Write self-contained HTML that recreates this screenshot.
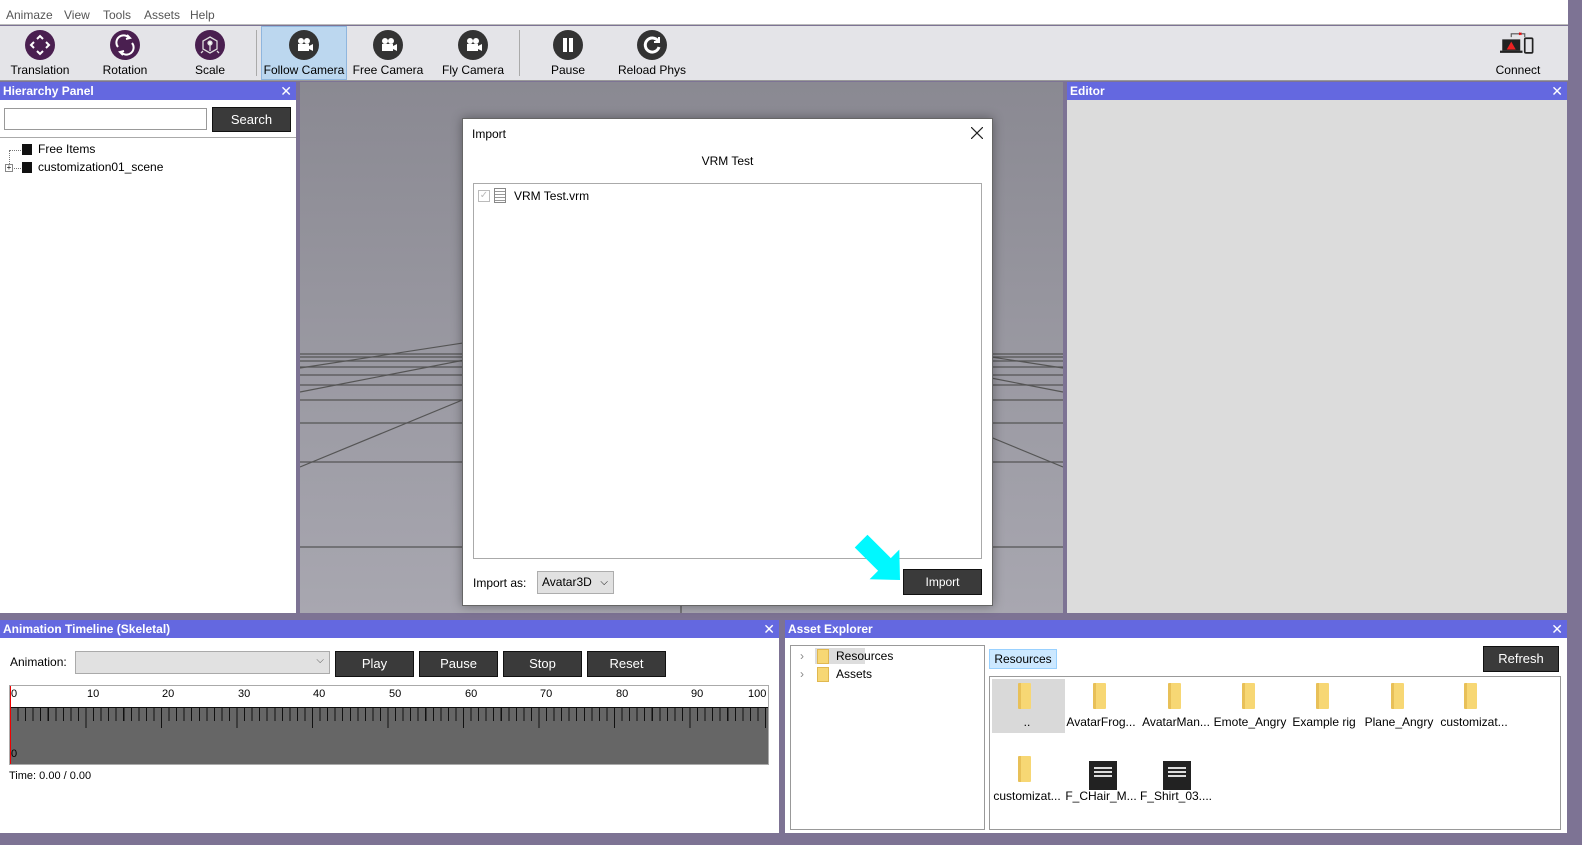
<!DOCTYPE html>
<html><head><meta charset="utf-8"><style>
*{box-sizing:border-box;margin:0;padding:0}
body{width:1582px;height:845px;overflow:hidden;background:#7d7394;font-family:"Liberation Sans",sans-serif;font-size:12px;color:#000;position:relative}
.a{position:absolute}
.menu{left:0;top:0;width:1568px;height:25px;background:#fff;border-bottom:1px solid #bbb}
.menu span{position:absolute;top:8px;color:#555;font-size:12px}
.tb{left:0;top:26px;width:1568px;height:55px;background:#e4e4e8;border-bottom:1px solid #999}
.tool{position:absolute;top:0;height:54px;text-align:center;font-size:12px}
.tool .ic{position:absolute;left:50%;top:4px;margin-left:-15px;width:30px;height:30px;border-radius:50%}
.tool .lb{position:absolute;left:0;right:0;top:37px;white-space:nowrap}
.title{height:18px;background:#6468e0;color:#fff;font-weight:bold;font-size:12px;line-height:18px;padding-left:3px}
.title .x{position:absolute;right:4px;top:0;font-weight:normal;font-size:14px}
.btn{position:absolute;background:#3a3a3a;border:1px solid #111;color:#fff;text-align:center;font-size:13px}
</style></head><body>
<div class="a menu">
<span style="left:6px">Animaze</span><span style="left:64px">View</span><span style="left:103px">Tools</span><span style="left:144px">Assets</span><span style="left:190px">Help</span>
</div>
<div class="a tb">
<div class="tool" style="left:0;width:80px"><div class="ic" style="background:#4a1f50"><svg width="30" height="30" viewBox="0 0 30 30" fill="none" stroke="#fff" stroke-width="2"><path d="M12 9l3-3 3 3M12 21l3 3 3-3M9 12l-3 3 3 3M21 12l3 3-3 3"/></svg></div><div class="lb">Translation</div></div>
<div class="tool" style="left:85px;width:80px"><div class="ic" style="background:#4a1f50"><svg width="30" height="30" viewBox="0 0 30 30" fill="none" stroke="#fff" stroke-width="2"><path d="M8 17a7 7 0 0 1 11-9M22 13a7 7 0 0 1-11 9"/><path d="M17 5l3 3-4 1M13 25l-3-3 4-1"/></svg></div><div class="lb">Rotation</div></div>
<div class="tool" style="left:170px;width:80px"><div class="ic" style="background:#4a1f50"><svg width="30" height="30" viewBox="0 0 30 30" fill="none" stroke="#ddd" stroke-width="1.3"><path d="M15 7l7 4v8l-7 4-7-4v-8z"/><circle cx="15" cy="13" r="2" fill="#fff"/><path d="M15 15v6M8 21l-2 2M22 21l2 2"/></svg></div><div class="lb">Scale</div></div>
<div style="position:absolute;left:256px;top:4px;width:1px;height:46px;background:#aaa"></div>
<div class="tool" style="left:261px;width:86px;background:#bcd7ef;border:1px solid #8fb6de"><div class="ic" style="background:#333;top:3px"><svg width="30" height="30" viewBox="0 0 30 30" fill="#fff"><circle cx="12" cy="11" r="3"/><circle cx="18" cy="11" r="3"/><rect x="9" y="14" width="11" height="7"/><path d="M20 16l4-2v7l-4-2z"/></svg></div><div class="lb" style="top:36px">Follow Camera</div></div>
<div class="tool" style="left:350px;width:76px"><div class="ic" style="background:#333"><svg width="30" height="30" viewBox="0 0 30 30" fill="#fff"><circle cx="12" cy="11" r="3"/><circle cx="18" cy="11" r="3"/><rect x="9" y="14" width="11" height="7"/><path d="M20 16l4-2v7l-4-2z"/></svg></div><div class="lb">Free Camera</div></div>
<div class="tool" style="left:435px;width:76px"><div class="ic" style="background:#333"><svg width="30" height="30" viewBox="0 0 30 30" fill="#fff"><circle cx="12" cy="11" r="3"/><circle cx="18" cy="11" r="3"/><rect x="9" y="14" width="11" height="7"/><path d="M20 16l4-2v7l-4-2z"/></svg></div><div class="lb">Fly Camera</div></div>
<div style="position:absolute;left:519px;top:4px;width:1px;height:46px;background:#aaa"></div>
<div class="tool" style="left:530px;width:76px"><div class="ic" style="background:#333"><svg width="30" height="30" viewBox="0 0 30 30" fill="#fff"><rect x="10" y="8" width="4" height="14"/><rect x="16" y="8" width="4" height="14"/></svg></div><div class="lb">Pause</div></div>
<div class="tool" style="left:612px;width:80px"><div class="ic" style="background:#333"><svg width="30" height="30" viewBox="0 0 30 30" fill="none" stroke="#fff" stroke-width="3"><path d="M21 11a7 7 0 1 0 1 6"/><path d="M22 7v5h-5" stroke-width="2"/></svg></div><div class="lb">Reload Phys</div></div>
<div class="tool" style="left:1488px;width:60px"><div style="position:absolute;left:12px;top:6px"><svg width="36" height="26" viewBox="0 0 32 22"><path d="M10 4V1h12v3" fill="none" stroke="#555"/><path d="M17 0l2 2M19 0l-2 2" stroke="#e00"/><rect x="2" y="6" width="16" height="10" fill="#222"/><path d="M10 8l4 7H6z" fill="#e22"/><rect x="0" y="16" width="20" height="2" fill="#222"/><rect x="22" y="5" width="7" height="13" rx="1" fill="none" stroke="#222" stroke-width="1.5"/></svg></div><div class="lb">Connect</div></div>
</div>

<!-- hierarchy -->
<div class="a" style="left:0;top:82px;width:296px;height:531px;background:#fff">
<div class="title" style="position:relative">Hierarchy Panel<span class="x">✕</span></div>
<div class="a" style="left:4px;top:26px;width:203px;height:22px;border:1px solid #999"></div>
<div class="btn" style="left:212px;top:25px;width:79px;height:25px;line-height:23px">Search</div>
<div class="a" style="left:0;top:55px;width:296px;height:1px;background:#aaa"></div>
<div class="a" style="left:9px;top:68px;width:1px;height:18px;border-left:1px dotted #777"></div>
<div class="a" style="left:10px;top:68px;width:11px;border-top:1px dotted #777"></div>
<div class="a" style="left:10px;top:86px;width:11px;border-top:1px dotted #777"></div>
<div class="a" style="left:5px;top:82px;width:8px;height:8px;border:1px solid #888;background:#fff;font-size:8px;line-height:6px;text-align:center">+</div>
<div class="a" style="left:22px;top:62px;width:10px;height:11px;background:#111"></div>
<div class="a" style="left:38px;top:60px">Free Items</div>
<div class="a" style="left:22px;top:80px;width:10px;height:11px;background:#111"></div>
<div class="a" style="left:38px;top:78px">customization01_scene</div>
</div>

<!-- viewport -->
<div class="a" style="left:300px;top:82px;width:763px;height:531px;background:linear-gradient(#8a8992,#a8a7b0);overflow:hidden">
<svg width="763" height="531" style="position:absolute;left:0;top:0" stroke="#555" stroke-width="1.2">
<g><line x1="0" y1="272" x2="763" y2="272"/><line x1="0" y1="275" x2="763" y2="275"/><line x1="0" y1="279" x2="763" y2="279"/><line x1="0" y1="285" x2="763" y2="285"/><line x1="0" y1="293" x2="763" y2="293"/><line x1="0" y1="303" x2="763" y2="303"/><line x1="0" y1="318" x2="763" y2="318"/><line x1="0" y1="341" x2="763" y2="341"/><line x1="0" y1="380" x2="763" y2="380"/><line x1="0" y1="465" x2="763" y2="465"/>
<line x1="0" y1="286" x2="300" y2="240"/><line x1="0" y1="310" x2="360" y2="240"/><line x1="0" y1="385" x2="400" y2="220"/>
<line x1="763" y1="286" x2="463" y2="240"/><line x1="763" y1="310" x2="403" y2="240"/><line x1="763" y1="385" x2="363" y2="220"/>
<line x1="381" y1="500" x2="381" y2="531"/></g>
</svg>
</div>

<!-- editor -->
<div class="a" style="left:1067px;top:82px;width:500px;height:531px;background:#dcdcdc">
<div class="title" style="position:relative">Editor<span class="x">✕</span></div>
</div>

<!-- dialog -->
<div class="a" style="left:462px;top:118px;width:531px;height:488px;background:#fff;border:1px solid #666;box-shadow:0 0 10px rgba(0,0,0,.35)">
<div class="a" style="left:9px;top:8px;font-size:12px">Import</div>
<svg class="a" style="right:9px;top:8px" width="12" height="12" stroke="#222" stroke-width="1.2"><path d="M0 0L12 12M12 0L0 12"/></svg>
<div class="a" style="left:0;right:0;top:35px;text-align:center">VRM Test</div>
<div class="a" style="left:10px;top:64px;width:509px;height:376px;border:1px solid #aaa">
<div class="a" style="left:4px;top:6px;width:12px;height:12px;border:1px solid #bbb;color:#bbb;font-size:10px;line-height:10px;text-align:center">✓</div>
<div class="a" style="left:20px;top:4px;width:12px;height:15px;border:1px solid #888;background:repeating-linear-gradient(#fff 0 2px,#999 2px 3px)"></div>
<div class="a" style="left:40px;top:5px">VRM Test.vrm</div>
</div>
<div class="a" style="left:10px;top:457px">Import as:</div>
<div class="a" style="left:74px;top:452px;width:77px;height:23px;background:#e1e1e1;border:1px solid #adadad;line-height:21px;padding-left:4px">Avatar3D<span style="position:absolute;right:5px;font-size:10px">⌵</span></div>
<div class="btn" style="left:440px;top:450px;width:79px;height:26px;line-height:24px;font-size:12px">Import</div>
</div>
<svg class="a" style="left:840px;top:525px" width="80" height="70"><g transform="translate(60,55) rotate(45)"><path d="M-55 -9L-22 -9L-22 -21L0 0L-22 21L-22 9L-55 9Z" fill="#00f8ff"/></g></svg>

<!-- timeline -->
<div class="a" style="left:0;top:620px;width:779px;height:213px;background:#fff">
<div class="title" style="position:relative">Animation Timeline (Skeletal)<span class="x">✕</span></div>
<div class="a" style="left:10px;top:35px">Animation:</div>
<div class="a" style="left:75px;top:31px;width:255px;height:23px;background:#e1e1e1;border:1px solid #aaa"><span style="position:absolute;right:5px;top:3px;font-size:10px;color:#555">⌵</span></div>
<div class="btn" style="left:335px;top:31px;width:79px;height:26px;line-height:24px">Play</div>
<div class="btn" style="left:419px;top:31px;width:79px;height:26px;line-height:24px">Pause</div>
<div class="btn" style="left:503px;top:31px;width:79px;height:26px;line-height:24px">Stop</div>
<div class="btn" style="left:587px;top:31px;width:79px;height:26px;line-height:24px">Reset</div>
<div class="a" style="left:9px;top:65px;width:760px;height:80px;border:1px solid #aaa;background:#fff">
<div class="a" style="left:0;top:21px;width:758px;height:57px;background:#666;border-top:1px solid #111;background-image:repeating-linear-gradient(90deg,#111 0 1px,transparent 1px 75.5px),repeating-linear-gradient(90deg,#111 0 1px,transparent 1px 7.55px);background-size:100% 20px,100% 13px;background-repeat:no-repeat"></div>
<div class="a" style="left:0;top:0;width:1px;height:78px;background:#e00"></div>
<div class="a" style="left:1px;top:2px;font-size:11px">0</div>
<div class="a" style="left:77px;top:2px;font-size:11px">10</div><div class="a" style="left:152px;top:2px;font-size:11px">20</div><div class="a" style="left:228px;top:2px;font-size:11px">30</div><div class="a" style="left:303px;top:2px;font-size:11px">40</div><div class="a" style="left:379px;top:2px;font-size:11px">50</div><div class="a" style="left:455px;top:2px;font-size:11px">60</div><div class="a" style="left:530px;top:2px;font-size:11px">70</div><div class="a" style="left:606px;top:2px;font-size:11px">80</div><div class="a" style="left:681px;top:2px;font-size:11px">90</div><div class="a" style="left:738px;top:2px;font-size:11px">100</div>
<div class="a" style="left:1px;top:62px;font-size:11px;color:#000">0</div>
</div>
<div class="a" style="left:9px;top:150px;font-size:11px">Time: 0.00 / 0.00</div>
</div>

<!-- asset explorer -->
<div class="a" style="left:785px;top:620px;width:782px;height:213px;background:#fff">
<div class="title" style="position:relative">Asset Explorer<span class="x">✕</span></div>
<div class="a" style="left:5px;top:25px;width:195px;height:185px;border:1px solid #999">
<div class="a" style="left:9px;top:3px;color:#888">›</div><div class="a" style="left:24px;top:2px;width:50px;height:16px;background:#ddd"></div>
<div class="a" style="left:26px;top:3px;width:12px;height:15px;background:#f7d774;border:1px solid #e0b850"></div><div class="a" style="left:45px;top:3px">Resources</div>
<div class="a" style="left:9px;top:21px;color:#888">›</div>
<div class="a" style="left:26px;top:21px;width:12px;height:15px;background:#f7d774;border:1px solid #e0b850"></div><div class="a" style="left:45px;top:21px">Assets</div>
</div>
<div class="a" style="left:204px;top:29px;width:68px;height:20px;background:#cce8ff;border:1px solid #99d1ff;line-height:18px;text-align:center">Resources</div>
<div class="btn" style="left:698px;top:26px;width:76px;height:26px;line-height:24px">Refresh</div>
<div class="a" style="left:204px;top:56px;width:572px;height:154px;border:1px solid #999">
<div class="a" style="left:2px;top:2px;width:73px;height:54px;background:#d9d9d9"></div>
</div>
</div>
<style>.fo{position:absolute;width:13px;height:26px;background:#f7d774;border-left:3px solid #e8c058;border-radius:1px}.fl{position:absolute;width:80px;text-align:center;font-size:12px}</style>
<div class="fo" style="left:1018px;top:683px"></div><div class="fl" style="left:987px;top:715px">..</div>
<div class="fo" style="left:1093px;top:683px"></div><div class="fl" style="left:1061px;top:715px">AvatarFrog...</div>
<div class="fo" style="left:1168px;top:683px"></div><div class="fl" style="left:1136px;top:715px">AvatarMan...</div>
<div class="fo" style="left:1242px;top:683px"></div><div class="fl" style="left:1210px;top:715px">Emote_Angry</div>
<div class="fo" style="left:1316px;top:683px"></div><div class="fl" style="left:1284px;top:715px">Example rig</div>
<div class="fo" style="left:1391px;top:683px"></div><div class="fl" style="left:1359px;top:715px">Plane_Angry</div>
<div class="fo" style="left:1464px;top:683px"></div><div class="fl" style="left:1434px;top:715px">customizat...</div>
<div class="fo" style="left:1018px;top:756px"></div><div class="fl" style="left:987px;top:789px">customizat...</div>
<div class="a" style="left:1089px;top:761px;width:28px;height:29px;background:#222"><div style="margin:6px 5px;height:2px;background:#ddd;box-shadow:0 4px #ddd,0 8px #ddd"></div></div><div class="fl" style="left:1061px;top:789px">F_CHair_M...</div>
<div class="a" style="left:1163px;top:761px;width:28px;height:29px;background:#222"><div style="margin:6px 5px;height:2px;background:#ddd;box-shadow:0 4px #ddd,0 8px #ddd"></div></div><div class="fl" style="left:1136px;top:789px">F_Shirt_03....</div>
</body></html>
